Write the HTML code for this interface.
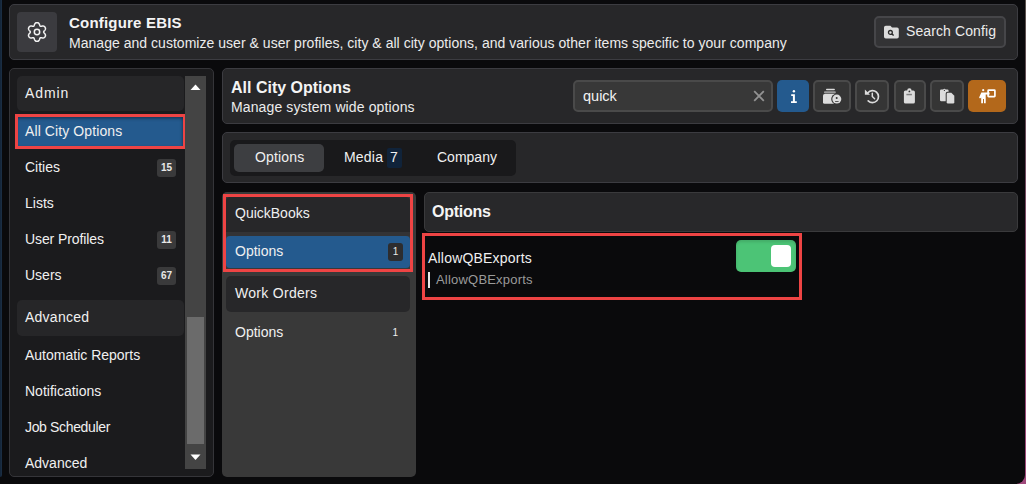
<!DOCTYPE html>
<html><head><meta charset="utf-8">
<style>
*{box-sizing:border-box;margin:0;padding:0}
html,body{width:1026px;height:484px;overflow:hidden;background:linear-gradient(#5a524e,#6a4c5c 30%,#8e4a70 60%,#a04a7c);font-family:"Liberation Sans",sans-serif;color:#f0f0f0}
.a{position:absolute}
.panel{position:absolute;background:#272729;border:1px solid #3c3c41;border-radius:5px}
.t{position:absolute;white-space:nowrap;line-height:1}
.btn{position:absolute;background:#353535;border:2px solid #4a4a4a;border-radius:5px}
.badge{position:absolute;background:#3a3a3b;border-radius:3px;color:#e8e8e8;font-size:10px;font-weight:bold;text-align:center;line-height:18px;height:18px}
svg.a{overflow:visible}
</style></head><body>
<div class="a" style="left:0;top:0;width:1024.6px;height:484px;background:#0a0a0c;border-bottom-right-radius:9px"></div>
<div class="a" style="left:0;top:0;width:2px;height:477px;background:linear-gradient(90deg,#132438,#1c3046);border-bottom-right-radius:2px"></div>

<!-- header -->
<div class="panel" style="left:9px;top:4px;width:1009px;height:56px"></div>
<div class="a" style="left:17px;top:12px;width:40px;height:40px;background:#3b3b3f;border-radius:4px"></div>
<svg class="a" style="left:25px;top:20px" width="24" height="24" viewBox="0 0 24 24" fill="none" stroke="#f2f2f2" stroke-width="1.5" stroke-linejoin="round">
<path d="M12.00 2.65L12.49 2.67L12.97 2.78L13.42 3.01L13.83 3.39L14.17 3.89L14.45 4.47L14.67 5.05L14.86 5.58L15.06 5.99L15.32 6.24L15.68 6.34L16.13 6.31L16.68 6.22L17.30 6.11L17.94 6.06L18.54 6.11L19.07 6.27L19.50 6.55L19.83 6.91L20.10 7.32L20.32 7.76L20.47 8.23L20.49 8.74L20.37 9.28L20.11 9.83L19.75 10.35L19.35 10.84L18.99 11.27L18.74 11.65L18.65 12.00L18.74 12.35L18.99 12.73L19.35 13.16L19.75 13.65L20.11 14.17L20.37 14.72L20.49 15.26L20.47 15.77L20.32 16.24L20.10 16.67L19.83 17.09L19.50 17.45L19.07 17.73L18.54 17.89L17.94 17.94L17.30 17.89L16.68 17.78L16.13 17.69L15.68 17.66L15.32 17.76L15.06 18.01L14.86 18.42L14.67 18.95L14.45 19.53L14.17 20.11L13.83 20.61L13.42 20.99L12.97 21.22L12.49 21.33L12.00 21.35L11.51 21.33L11.03 21.22L10.58 20.99L10.17 20.61L9.83 20.11L9.55 19.53L9.33 18.95L9.14 18.42L8.94 18.01L8.68 17.76L8.32 17.66L7.87 17.69L7.32 17.78L6.70 17.89L6.06 17.94L5.46 17.89L4.93 17.73L4.50 17.45L4.17 17.09L3.90 16.68L3.68 16.24L3.53 15.77L3.51 15.26L3.63 14.72L3.89 14.17L4.25 13.65L4.65 13.16L5.01 12.73L5.26 12.35L5.35 12.00L5.26 11.65L5.01 11.27L4.65 10.84L4.25 10.35L3.89 9.83L3.63 9.28L3.51 8.74L3.53 8.23L3.68 7.76L3.90 7.32L4.17 6.91L4.50 6.55L4.93 6.27L5.46 6.11L6.06 6.06L6.70 6.11L7.32 6.22L7.87 6.31L8.32 6.34L8.68 6.24L8.94 5.99L9.14 5.58L9.33 5.05L9.55 4.47L9.83 3.89L10.17 3.39L10.58 3.01L11.03 2.78L11.51 2.67Z"/>
<circle cx="12" cy="12" r="2.7"/></svg>
<div class="t" style="left:69px;top:15px;font-size:15px;font-weight:bold;letter-spacing:0.2px;color:#f4f4f4">Configure EBIS</div>
<div class="t" style="left:69px;top:36px;font-size:14px;letter-spacing:0.03px;color:#ececec">Manage and customize user &amp; user profiles, city &amp; all city options, and various other items specific to your company</div>
<div class="btn" style="left:874px;top:16px;width:132px;height:32px;background:#333335;border-color:#464649"></div>
<svg class="a" style="left:880px;top:20px" width="24" height="24" viewBox="0 0 24 24">
<path d="M4 7.5Q4 5.7 5.8 5.7H10.4L12 7.4H17Q18.8 7.4 18.8 9.2V16.7Q18.8 18.5 17 18.5H5.8Q4 18.5 4 16.7z" fill="#dcdcdc"/>
<circle cx="10.4" cy="12.4" r="1.9" fill="none" stroke="#2a2a2a" stroke-width="1.3"/><path d="M11.8 13.8l1.8 1.8" stroke="#2a2a2a" stroke-width="1.4"/></svg>
<div class="t" style="left:906px;top:24px;font-size:14px;letter-spacing:0.1px;color:#ececec">Search Config</div>

<!-- sidebar -->
<div class="panel" style="left:9px;top:68px;width:205px;height:409px;background:#1b1b1d;border-color:#353539"></div>
<div class="a" style="left:17px;top:76px;width:167px;height:35px;background:#262628;border-radius:5px"></div>
<div class="t" style="left:25px;top:86px;font-size:14px;letter-spacing:0.9px">Admin</div>
<div class="a" style="left:15px;top:114px;width:171px;height:35px;background:#245a8e;border:3px solid #ee4444"></div>
<div class="a" style="left:18px;top:117px;width:165px;height:29px;box-shadow:inset 0 3px 3px -1px rgba(0,0,0,0.3),inset -2px 0 3px -1px rgba(0,0,0,0.25)"></div>
<div class="t" style="left:25px;top:124px;font-size:14px;letter-spacing:0.1px">All City Options</div>
<div class="t" style="left:25px;top:160px;font-size:14px">Cities</div>
<div class="badge" style="left:157px;top:159px;width:19px">15</div>
<div class="t" style="left:25px;top:196px;font-size:14px">Lists</div>
<div class="t" style="left:25px;top:232px;font-size:14px;letter-spacing:-0.1px">User Profiles</div>
<div class="badge" style="left:157px;top:231px;width:19px">11</div>
<div class="t" style="left:25px;top:268px;font-size:14px">Users</div>
<div class="badge" style="left:157px;top:267px;width:19px">67</div>
<div class="a" style="left:17px;top:300px;width:167px;height:36px;background:#262628;border-radius:5px"></div>
<div class="t" style="left:25px;top:310px;font-size:14px;letter-spacing:0.25px">Advanced</div>
<div class="t" style="left:25px;top:348px;font-size:14px">Automatic Reports</div>
<div class="t" style="left:25px;top:384px;font-size:14px">Notifications</div>
<div class="t" style="left:25px;top:420px;font-size:14px;letter-spacing:-0.35px">Job Scheduler</div>
<div class="t" style="left:25px;top:456px;font-size:14px">Advanced</div>
<!-- scrollbar -->
<div class="a" style="left:185px;top:76px;width:21px;height:393px;background:#444444"></div>
<div class="a" style="left:187px;top:317px;width:17px;height:127px;background:#6b6b6b"></div>
<svg class="a" style="left:190px;top:84px" width="11" height="7"><path d="M0.5 6L5.5 0.5 10.5 6z" fill="#fff"/></svg>
<svg class="a" style="left:190px;top:454px" width="11" height="7"><path d="M0.5 0.5L5.5 6 10.5 0.5z" fill="#fff"/></svg>

<!-- main header -->
<div class="panel" style="left:222px;top:68px;width:796px;height:56px"></div>
<div class="t" style="left:231px;top:80px;font-size:16px;font-weight:bold;color:#f4f4f4">All City Options</div>
<div class="t" style="left:231px;top:100px;font-size:14px;letter-spacing:0.12px;color:#ececec">Manage system wide options</div>
<div class="a" style="left:573px;top:80px;width:200px;height:32px;background:#383838;border:2px solid #4a4a4a;border-radius:5px"></div>
<div class="t" style="left:583px;top:89px;font-size:14.5px;color:#f2f2f2">quick</div>
<svg class="a" style="left:753px;top:90px" width="12" height="12"><path d="M1.2 1.2L10.8 10.8M10.8 1.2L1.2 10.8" stroke="#929292" stroke-width="1.8"/></svg>
<div class="a" style="left:777px;top:80px;width:32px;height:32px;background:#245a8e;border-radius:5px"></div>
<svg class="a" style="left:777px;top:80px" width="32" height="32"><circle cx="16.9" cy="11.2" r="1.2" fill="#fff"/><path d="M14.2 14.2H17.9V21.3H19.8V23.1H14V21.3H15.9V16H14.2z" fill="#fff"/></svg>
<div class="btn" style="left:813px;top:80px;width:38px;height:32px"></div>
<svg class="a" style="left:818px;top:84px" width="28" height="24" viewBox="0 0 28 24">
<rect x="8" y="4.7" width="8.9" height="1.5" rx="0.7" fill="#dcdcdc"/>
<rect x="6" y="7.2" width="11.8" height="2.2" rx="0.8" fill="#9a9a9a"/>
<path d="M6.5 9.9H17Q18 9.9 18 11V19.8H6.5Q5 19.8 5 18.3V11.4Q5 9.9 6.5 9.9z" fill="#dcdcdc"/>
<circle cx="18.8" cy="15.1" r="5.6" fill="#353535"/>
<circle cx="18.8" cy="15.1" r="4.5" fill="#dcdcdc"/>
<circle cx="18.7" cy="14.1" r="1" fill="#353535"/>
<rect x="17.1" y="17.1" width="3.5" height="0.8" fill="#353535"/>
</svg>
<div class="btn" style="left:855px;top:80px;width:34px;height:32px"></div>
<svg class="a" style="left:860px;top:84px" width="26" height="24" viewBox="0 0 26 24" fill="none">
<path d="M7.9 8.7A6 6 0 1 1 8.2 16.8" stroke="#dcdcdc" stroke-width="1.7" stroke-linecap="round"/>
<path d="M4.9 5.6V10.7H10z" fill="#dcdcdc"/>
<path d="M12.3 9.2V12.5L14.6 14.7" stroke="#dcdcdc" stroke-width="1.5" stroke-linecap="round"/>
</svg>
<div class="btn" style="left:894px;top:80px;width:32px;height:32px"></div>
<svg class="a" style="left:898px;top:84px" width="24" height="24" viewBox="0 0 24 24">
<path d="M7.5 6.4H9.2A2.2 2.2 0 0 1 13.6 6.4H15.3Q16.9 6.4 16.9 8V18Q16.9 19.6 15.3 19.6H7.5Q5.9 19.6 5.9 18V8Q5.9 6.4 7.5 6.4z" fill="#dcdcdc"/>
<circle cx="11.4" cy="7.4" r="0.9" fill="#353535"/>
<rect x="8.4" y="9.8" width="5.5" height="1.5" fill="#808080"/>
</svg>
<div class="btn" style="left:930px;top:80px;width:34px;height:32px"></div>
<svg class="a" style="left:935px;top:84px" width="24" height="24" viewBox="0 0 24 24">
<path d="M6.2 5.5H8.2A1.3 1.3 0 0 1 10.6 5.5H12.4Q13.6 5.5 13.6 6.7V16.1Q13.6 17.3 12.4 17.3H6.2Q5 17.3 5 16.1V6.7Q5 5.5 6.2 5.5z" fill="#dcdcdc"/>
<circle cx="9.4" cy="6.4" r="0.6" fill="#353535"/>
<path d="M12.4 7.7H16.6L20.3 11.4V18.4Q20.3 20.6 18.4 20.6H12.7Q10.7 20.6 10.7 18.6V9.7Q10.7 7.7 12.4 7.7z" fill="#353535"/>
<path d="M12.9 8.7H16.3L19.3 11.7V18.3Q19.3 19.6 18 19.6H13Q11.7 19.6 11.7 18.3V10Q11.7 8.7 12.9 8.7z" fill="#dcdcdc"/>
</svg>
<div class="a" style="left:968px;top:80px;width:38px;height:32px;background:#b3681b;border-radius:5px"></div>
<svg class="a" style="left:975px;top:84px" width="26" height="24" viewBox="0 0 26 24">
<circle cx="8.2" cy="6.2" r="1.1" fill="#fff"/>
<path d="M6.3 8.6H11.2L14.6 8.6V10.6H10.7V19.3H9V15H8V19.3H6.2V13.5L5 14.4 4.1 13.5z" fill="#fff"/>
<rect x="13.1" y="6.1" width="6.8" height="6.6" rx="0.6" fill="none" stroke="#fff" stroke-width="1.7"/>
</svg>

<!-- tabs panel -->
<div class="panel" style="left:222px;top:132px;width:796px;height:51px"></div>
<div class="a" style="left:230px;top:140px;width:286px;height:36px;background:#19191b;border-radius:5px"></div>
<div class="a" style="left:234px;top:144px;width:90px;height:28px;background:#3d3e41;border-radius:5px"></div>
<div class="t" style="left:255px;top:150px;font-size:14px;letter-spacing:0.15px">Options</div>
<div class="t" style="left:344px;top:150px;font-size:14px;letter-spacing:0.2px">Media</div>
<div class="a" style="left:387px;top:148px;width:15px;height:20px;background:#10233a;border-radius:2px"></div>
<div class="t" style="left:390px;top:150px;font-size:14px">7</div>
<div class="t" style="left:437px;top:150px;font-size:14px">Company</div>

<!-- middle nav -->
<div class="a" style="left:222px;top:192px;width:194px;height:285px;background:#393939;border-radius:5px"></div>
<div class="a" style="left:226px;top:197px;width:184px;height:35px;background:#272729;border-radius:4px 4px 0 0"></div>
<div class="a" style="left:226px;top:232px;width:184px;height:4px;background:#333335"></div>
<div class="a" style="left:226px;top:236px;width:184px;height:32px;background:#245a8e;border-radius:4px"></div>
<div class="a" style="left:223px;top:194px;width:190px;height:78px;border:3px solid #ee4444"></div>
<div class="t" style="left:235px;top:206px;font-size:14px">QuickBooks</div>
<div class="t" style="left:235px;top:244px;font-size:14px">Options</div>
<div class="badge" style="left:388px;top:243px;width:15px;height:18px;line-height:18px;background:#2d2d2f;font-weight:normal">1</div>
<div class="a" style="left:226px;top:276px;width:184px;height:36px;background:#272729;border-radius:5px"></div>
<div class="t" style="left:235px;top:286px;font-size:14px;letter-spacing:0.3px">Work Orders</div>
<div class="t" style="left:235px;top:325px;font-size:14px">Options</div>
<div class="t" style="left:392.5px;top:328px;font-size:10px">1</div>

<!-- options content -->
<div class="a" style="left:424px;top:192px;width:594px;height:40px;background:#28282a;border:1px solid #3a3a3c;border-radius:5px"></div>
<div class="t" style="left:432px;top:204px;font-size:16px;font-weight:bold;letter-spacing:-0.25px;color:#f4f4f4">Options</div>
<div class="a" style="left:422px;top:233px;width:380px;height:67px;border:3px solid #ee4444"></div>
<div class="t" style="left:428px;top:250.5px;font-size:14px;letter-spacing:0.2px">AllowQBExports</div>
<div class="a" style="left:428px;top:272px;width:2px;height:16px;background:#eaeaea"></div>
<div class="t" style="left:436px;top:273px;font-size:13px;letter-spacing:0.2px;color:#9a9a9a">AllowQBExports</div>
<div class="a" style="left:736px;top:240px;width:60px;height:32px;background:#4cc476;border-radius:5px;box-shadow:inset 0 2px 3px rgba(0,0,0,0.12)"></div>
<div class="a" style="left:771px;top:245px;width:20px;height:22px;background:#fff;border-radius:4px"></div>
</body></html>
